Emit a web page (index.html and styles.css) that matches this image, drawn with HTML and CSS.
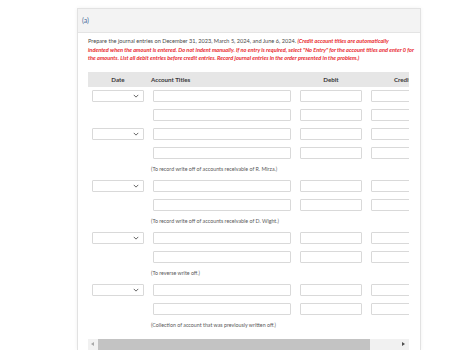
FILE: index.html
```html
<!DOCTYPE html>
<html lang="en">
<head>
  <meta charset="UTF-8">
  <meta name="viewport" content="width=device-width, initial-scale=1.0">
  <title>Journal Entries</title>
  <link rel="stylesheet" href="styles.css">
</head>
<body>
  <div class="card">
    <div class="card-head">(a)</div>
    <div class="card-body">
      <p class="prompt">Prepare the journal entries on December 31, 2023, March 5, 2024, and June 6, 2024. <em class="hint">(Credit account titles are automatically<br>indented when the amount is entered. Do not indent manually. If no entry is required, select "No Entry" for the account titles and enter 0 for the amounts. List all debit entries before credit entries. Record journal entries in the order presented in the problem.)</em></p>

      <div class="table-wrap">
        <div class="journal">
          <div class="row head">
            <span class="th center">Date</span>
            <span class="th">Account Titles</span>
            <span class="th center">Debit</span>
            <span class="th center">Credit</span>
          </div>

          <div class="row">
            <div class="select"><svg viewBox="0 0 8 5" width="6" height="4"><path d="M1 1l3 3 3-3" fill="none" stroke="#555" stroke-width="1.2"/></svg></div>
            <input class="field" type="text">
            <input class="field" type="text">
            <input class="field" type="text">
          </div>
          <div class="row">
            <span></span>
            <input class="field" type="text">
            <input class="field" type="text">
            <input class="field" type="text">
          </div>
          <div class="row">
            <div class="select"><svg viewBox="0 0 8 5" width="6" height="4"><path d="M1 1l3 3 3-3" fill="none" stroke="#555" stroke-width="1.2"/></svg></div>
            <input class="field" type="text">
            <input class="field" type="text">
            <input class="field" type="text">
          </div>
          <div class="row">
            <span></span>
            <input class="field" type="text">
            <input class="field" type="text">
            <input class="field" type="text">
          </div>
          <div class="note">(To record write off of accounts receivable of R. Mirza.)</div>

          <div class="row">
            <div class="select"><svg viewBox="0 0 8 5" width="6" height="4"><path d="M1 1l3 3 3-3" fill="none" stroke="#555" stroke-width="1.2"/></svg></div>
            <input class="field" type="text">
            <input class="field" type="text">
            <input class="field" type="text">
          </div>
          <div class="row">
            <span></span>
            <input class="field" type="text">
            <input class="field" type="text">
            <input class="field" type="text">
          </div>
          <div class="note">(To record write off of accounts receivable of D. Wight.)</div>

          <div class="row">
            <div class="select"><svg viewBox="0 0 8 5" width="6" height="4"><path d="M1 1l3 3 3-3" fill="none" stroke="#555" stroke-width="1.2"/></svg></div>
            <input class="field" type="text">
            <input class="field" type="text">
            <input class="field" type="text">
          </div>
          <div class="row">
            <span></span>
            <input class="field" type="text">
            <input class="field" type="text">
            <input class="field" type="text">
          </div>
          <div class="note">(To reverse write off.)</div>

          <div class="row">
            <div class="select"><svg viewBox="0 0 8 5" width="6" height="4"><path d="M1 1l3 3 3-3" fill="none" stroke="#555" stroke-width="1.2"/></svg></div>
            <input class="field" type="text">
            <input class="field" type="text">
            <input class="field" type="text">
          </div>
          <div class="row">
            <span></span>
            <input class="field" type="text">
            <input class="field" type="text">
            <input class="field" type="text">
          </div>
          <div class="note">(Collection of account that was previously written off.)</div>
        </div>
      </div>

      <div class="scrollbar">
        <span class="arrow left"></span>
        <span class="thumb"></span>
        <span class="arrow right"></span>
      </div>
    </div>
  </div>
</body>
</html>
```

FILE: styles.css
```css
body {
  margin: 0;
  background: #ffffff;
  font-family: 'Lato', 'Liberation Sans', sans-serif;
  color: #333;
}

.card {
  margin: 8px 0 0 77px;
  width: 342px;
  border: 1px solid #e2e2e2;
  border-bottom: none;
  box-shadow: 0 0 4px rgba(0, 0, 0, 0.06);
  background: #fff;
}

.card-head {
  height: 23px;
  line-height: 23px;
  padding-left: 4px;
  background: #f3f3f3;
  border-bottom: 1px solid #e4e4e4;
  color: #4a6c9b;
  font-size: 7px;
}

.card-body {
  padding: 4px 11px 0 10px;
}

.prompt {
  margin: 0 -5px 9px 0;
  font-size: 5.6px;
  line-height: 8.6px;
  color: #4a4a4a;
}

.hint {
  color: #e8282d;
  font-weight: bold;
}

.table-wrap {
  overflow: hidden;
  width: 321px;
}

.journal {
  width: 370px;
  display: flex;
  flex-direction: column;
  gap: 7px;
}

.row {
  display: grid;
  grid-template-columns: 52px 138px 62px 62px;
  column-gap: 9px;
  padding-left: 4px;
  height: 12px;
}

.row.head {
  height: 15px;
  margin-bottom: -4px;
  background: #e6e6e6;
  align-items: center;
}

.th {
  font-size: 6.2px;
  font-weight: bold;
  color: #3a3a3a;
  margin-left: -2px;
}

.th.center {
  text-align: center;
  margin-left: 0;
}

.th.center:last-child {
  padding-left: 1px;
}

.select,
.field {
  box-sizing: border-box;
  height: 12px;
  border: 1px solid #d9d9d9;
  background: #fff;
  margin: 0;
  padding: 0;
  border-radius: 1px;
}

.select {
  display: flex;
  align-items: center;
  justify-content: flex-end;
  padding-right: 4px;
}

.note {
  padding-left: 63px;
  height: 7px;
  line-height: 7px;
  font-size: 5.3px;
  color: #5a5a5a;
}

.scrollbar {
  margin-top: 10px;
  width: 321px;
  height: 11px;
  background: #f1f1f1;
  display: flex;
  align-items: center;
}

.thumb {
  margin-left: 4px;
  width: 272px;
  height: 11px;
  background: #c3c3c3;
}

.arrow {
  width: 0;
  height: 0;
  border-top: 2.5px solid transparent;
  border-bottom: 2.5px solid transparent;
}

.arrow.left {
  margin-left: 3px;
  border-right: 3px solid #a8a8a8;
}

.arrow.right {
  margin-left: auto;
  margin-right: 4px;
  border-left: 3px solid #505050;
}
```
